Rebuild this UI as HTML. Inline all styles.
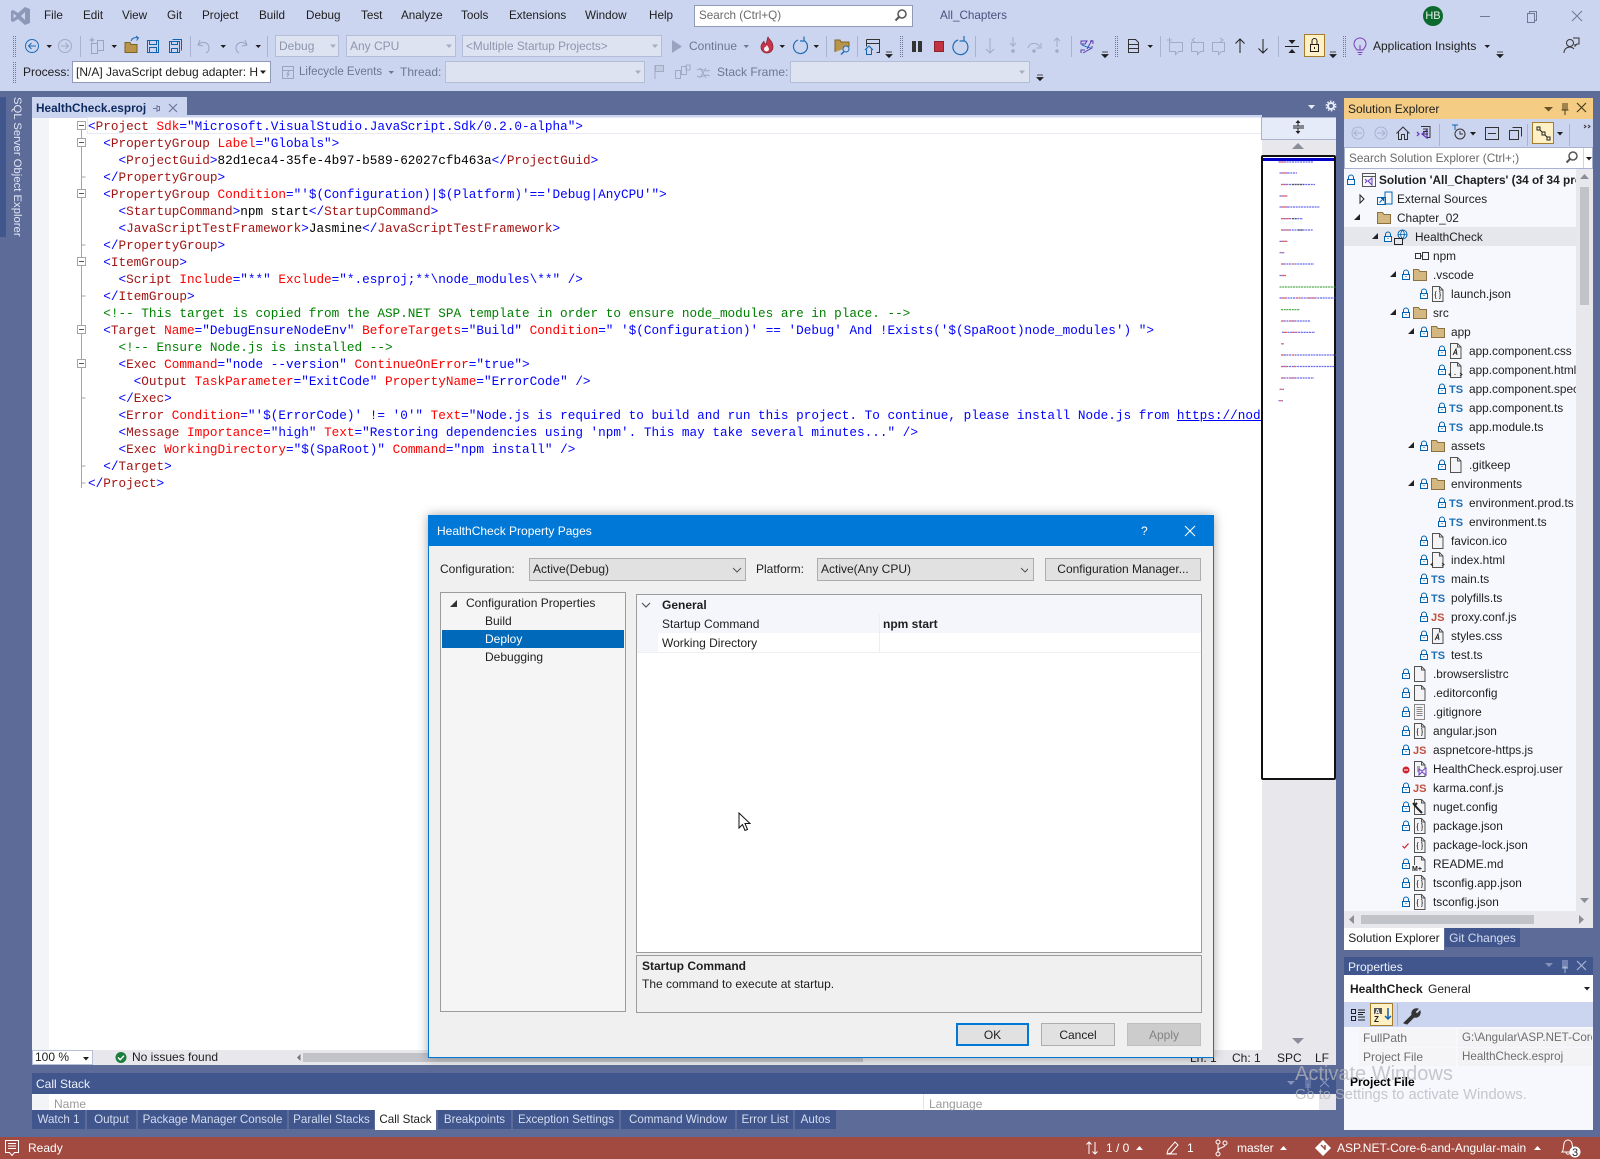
<!DOCTYPE html>
<html lang="en"><head><meta charset="utf-8"><title>HealthCheck Property Pages</title>
<style>
html,body{margin:0;padding:0}
body{position:relative;width:1600px;height:1159px;overflow:hidden;background:#5d6b99;font:12px/16px "Liberation Sans",sans-serif;color:#1e1e1e}
div,span.t,svg.a{position:absolute}
.t{position:absolute;white-space:nowrap;line-height:16px}
.m{font-size:11.7px}
.dim{color:#6d7792}
.cb{background:#dde3f1;border:1px solid #b4bdd8;box-sizing:border-box;color:#8d96ae}
.tab{background:#40568d;color:#d5dcf0;height:19px;top:1110px;line-height:20px;text-align:center;font-size:11.6px}
pre{position:absolute;left:88px;top:118px;margin:0;font:12.7px/17px "Liberation Mono",monospace;color:#00f;width:1173px;overflow:hidden;white-space:pre}
pre i{font-style:normal;color:#a31515}pre em{font-style:normal;color:#f00}pre b{font-weight:normal;color:#000}pre u{color:#00f}pre s{text-decoration:none;color:#008000}
.btn{position:absolute;top:1023px;height:23px;box-sizing:border-box;background:#e1e1e1;border:1px solid #adadad;text-align:center;line-height:23px}
.dc{background:#e1e1e1;border:1px solid #adadad;box-sizing:border-box;top:558px;height:23px;line-height:21px}
svg text{font:11.85px "Liberation Sans",sans-serif;fill:#1e1e1e}
</style></head><body>

<!-- chrome top -->
<div style="left:0;top:0;width:1600px;height:91px;background:#ccd5f0"></div>
<span class="t m" style="left:44px;top:8px">File</span>
<span class="t m" style="left:83px;top:8px">Edit</span>
<span class="t m" style="left:122px;top:8px">View</span>
<span class="t m" style="left:167px;top:8px">Git</span>
<span class="t m" style="left:202px;top:8px">Project</span>
<span class="t m" style="left:259px;top:8px">Build</span>
<span class="t m" style="left:306px;top:8px">Debug</span>
<span class="t m" style="left:361px;top:8px">Test</span>
<span class="t m" style="left:401px;top:8px">Analyze</span>
<span class="t m" style="left:461px;top:8px">Tools</span>
<span class="t m" style="left:509px;top:8px">Extensions</span>
<span class="t m" style="left:585px;top:8px">Window</span>
<span class="t m" style="left:649px;top:8px">Help</span>
<div style="left:694px;top:5px;width:219px;height:22px;background:#fff;border:1px solid #8f99b8;box-sizing:border-box"></div>
<span class="t m" style="left:699px;top:8px;color:#6a6a6a">Search (Ctrl+Q)</span>
<span class="t m" style="left:940px;top:8px;color:#47527d">All_Chapters</span>
<div style="left:1423px;top:6px;width:20px;height:20px;border-radius:50%;background:#0d6a2e;color:#e6f2ea;text-align:center;line-height:20px;font-size:11px">HB</div>

<!-- toolbar row 2 controls -->
<div class="cb" style="left:275px;top:35px;width:64px;height:22px;padding-left:3px;line-height:20px">Debug</div>
<div class="cb" style="left:346px;top:35px;width:110px;height:22px;padding-left:3px;line-height:20px">Any CPU</div>
<div class="cb" style="left:462px;top:35px;width:200px;height:22px;padding-left:3px;line-height:20px;font-size:11.8px">&lt;Multiple Startup Projects&gt;</div>
<span class="t dim" style="left:689px;top:38px">Continue</span>
<span class="t" style="left:1373px;top:38px">Application Insights</span>
<div style="left:1304px;top:34px;width:21px;height:23px;background:#fff1c5;border:1px solid #a67c2b;box-sizing:border-box"></div>

<!-- toolbar row 3 -->
<span class="t" style="left:23px;top:64px">Process:</span>
<div style="left:72px;top:61px;width:199px;height:22px;background:#fff;border:1px solid #8f99b8;box-sizing:border-box;padding-left:3px;line-height:20px;white-space:nowrap;overflow:hidden">[N/A] JavaScript debug adapter: H</div>
<span class="t dim" style="left:299px;top:64px;font-size:11.5px">Lifecycle Events</span>
<span class="t dim" style="left:400px;top:64px">Thread:</span>
<div class="cb" style="left:445px;top:61px;width:200px;height:22px"></div>
<span class="t dim" style="left:717px;top:64px">Stack Frame:</span>
<div class="cb" style="left:790px;top:61px;width:240px;height:22px"></div>

<!-- toolbar icons -->
<svg class="a" style="left:0;top:0" width="1600" height="92" viewBox="0 0 1600 92" fill="none">
<!-- logo -->
<path d="M13 10l5 3 7-6 5 2v14l-5 2-7-6-5 3-2-1V11z" fill="#8d97b8"/><path d="M25 12l-4 4 4 4z" fill="#ccd5f0"/><path d="M13.500 13.500l3 2.500-3 2.500z" fill="#ccd5f0"/>
<!-- menu search -->
<circle cx="902" cy="14" r="4" stroke="#555" stroke-width="1.500"/><path d="M899 17l-3.500 3.500" stroke="#555" stroke-width="2"/>
<!-- window buttons -->
<path d="M1480 16.500h10" stroke="#707a98"/><path d="M1527.500 13.500h7v9h-7zM1529.500 13.500v-2h7v9h-2" stroke="#707a98"/><path d="M1572 11l10 10M1582 11l-10 10" stroke="#707a98"/>
<!-- grippers -->
<path d="M13.500 36v21M15.500 36v21M13.500 62v21M15.500 62v21M900.500 36v21M902.500 36v21M1115.500 36v21M1117.500 36v21M1343.500 36v21M1345.500 36v21" stroke="#6d7899" stroke-dasharray="1 1"/>
<!-- separators -->
<path d="M80.500 36v21M190.500 36v21M267.500 36v21M826.500 36v21M857.500 36v21M975.500 36v21M1071.500 36v21M1160.500 36v21M1278.500 36v21" stroke="#a9b3d0"/>
<!-- back / forward -->
<circle cx="32" cy="46" r="6.500" stroke="#1f6cb5"/><path d="M36 46h-7.500M31.500 43l-3 3 3 3" stroke="#1f6cb5"/>
<circle cx="65" cy="46" r="6.500" stroke="#a2abc4"/><path d="M61 46h7.500M65.500 43l3 3-3 3" stroke="#a2abc4"/>
<!-- carets -->
<path d="M46.500 45h5.500l-2.750 3z M220.500 45h5.500l-2.750 3z M255.500 45h5.500l-2.750 3z M111.500 45h5.500l-2.750 3z" fill="#1e1e1e"/>
<path d="M743.500 45h5.500l-2.750 3z" fill="#6d7792"/>
<path d="M779.500 45h5.500l-2.750 3zM813.500 45h5.500l-2.750 3zM1147.500 45h5.500l-2.750 3zM1484.500 45h5.500l-2.750 3z" fill="#1e1e1e"/>
<path d="M388.500 71h5.500l-2.750 3z" fill="#6d7792"/>
<path d="M886 52h6M886 54.500h6l-3 3zM1102 52h6M1102 54.500h6l-3 3zM1330 52h6M1330 54.500h6l-3 3zM1497 52h6M1497 54.500h6l-3 3zM1037 75h6M1037 77.500h6l-3 3z" stroke="#1e1e1e" fill="#1e1e1e" stroke-width=".8"/>
<!-- new project -->
<path d="M91.500 43.500h6v10h-6zM97.500 40.500h6v10h-6z" stroke="#9aa3bf"/><path d="M92 37l1 2 2 1-2 1-1 2-1-2-2-1 2-1z" fill="#a2abc4"/>
<!-- open -->
<path d="M125 52.500v-10h5l1 2h6v8z" fill="#b8954a" stroke="#7c6328"/><path d="M131 41c1-3 4-4 7-3M136 36l2.500 2-2 2.500" stroke="#1f6cb5"/>
<!-- save -->
<path d="M147.500 40.500h11v12h-11zM149.500 40.500v4h7v-4M149.500 52.500v-5h7v5" stroke="#0f62b0"/>
<path d="M169.500 41.500h10v11h-10zM171.500 41.500v3h6v-3M171.500 52.500v-4h6v4M172.500 39.500h9v11" stroke="#0f62b0"/>
<!-- undo / redo -->
<path d="M200 40l-2 5 5 1M198 45c5-5 11-2 11 3 0 2-1 4-3 5" stroke="#9aa3bf"/>
<path d="M245 40l2 5-5 1M247 45c-5-5-11-2-11 3 0 2 1 4 3 5" stroke="#9aa3bf"/>
<!-- play -->
<path d="M672 40l10 6.500-10 6.500z" fill="#9aa3bf"/>
<!-- fire -->
<g transform="translate(2,0)"><path d="M766 37c1 3 5 4 5 10a6 6 0 0 1-12 0c0-3 2-4 3-6 0 2 1 3 2 3 1-2 1-5 2-7z" fill="#c8344a" stroke="#7a2330" stroke-width=".7"/><path d="M765 45c1 2 2 3 2 4a2.500 2.500 0 0 1-5 0c0-2 2-2 3-4z" fill="#f4f4f4"/></g>
<!-- restart -->
<path d="M798 40a7 7 0 1 0 6 .500M804 36.500v4.500h-4" stroke="#1f6cb5" stroke-width="1.200"/>
<!-- folder search -->
<path d="M835 52v-12h5l1 2h8v5" fill="#b8954a" stroke="#7c6328"/><circle cx="846" cy="49" r="3" fill="#ccd5f0" stroke="#1f6cb5"/><path d="M844 51.500l-3 3" stroke="#1f6cb5" stroke-width="1.500"/>
<!-- window home -->
<path d="M866.500 39.500h13v13h-3M866.500 39.500v7M866.500 43.500h13" stroke="#333"/><path d="M865 50l4-4 4 4M866.500 49.500v5h5v-5" stroke="#0f62b0"/>
<!-- pause stop restart -->
<path d="M912 41h4v11h-4zM918 41h4v11h-4z" fill="#333"/>
<rect x="934.500" y="41.500" width="9" height="10" fill="#c4323f" stroke="#8a2530"/>
<path d="M958 40a7.500 7.500 0 1 0 6 .500M964 36v5h-4.500" stroke="#1f6cb5" stroke-width="1.200"/>
<!-- steps -->
<path d="M990 38v15M986 49l4 4 4-4" stroke="#a2abc4"/>
<path d="M1013 37v9M1010 43l3 3 3-3" stroke="#a2abc4"/><circle cx="1013" cy="51" r="1.800" fill="#a2abc4"/>
<path d="M1028 48c2-6 9-6 12-1M1041 43v5h-5" stroke="#a2abc4"/><circle cx="1034" cy="51" r="1.800" fill="#a2abc4"/>
<path d="M1057 47v-9M1054 41l3-3 3 3" stroke="#a2abc4"/><circle cx="1057" cy="51" r="1.800" fill="#a2abc4"/>
<!-- hex -->
<path d="M1081 41h6l-2 3h-4zM1087 49l5-9M1083 53l9-5v-2M1081 53v-3h4M1090 41h3v3" stroke="#5a3cae"/><path d="M1082 45c3 1 6 3 9 3" stroke="#1f6cb5"/>
<!-- doc -->
<path d="M1128.500 39.500h7l3 3v10h-10zM1128.500 44.500h10M1128.500 48.500h10" stroke="#333"/>
<!-- comments -->
<g stroke="#a2abc4"><path d="M1169.500 42.500h13v9h-4l-3 3v-3h-6zM1167 40h5M1169.500 37.500v5"/>
<path d="M1191.500 42.500h12v9h-3l-3 3v-3h-6zM1195 38l-3 2 3 2"/>
<path d="M1212.500 42.500h12v9h-3l-3 3v-3h-6zM1220 38l3 2-3 2"/></g>
<!-- up/down -->
<path d="M1240 39v14M1235.500 43.500l4.500-4.500 4.500 4.500M1263 39v14M1258.500 48.500l4.500 4.500 4.500-4.500" stroke="#1e1e1e"/>
<!-- fit -->
<path d="M1285 46.500h14" stroke="#1e1e1e"/><path d="M1292 44l-3.500-4h7zM1292 49l-3.500 4h7z" fill="#1e1e1e"/>
<!-- lock highlighted -->
<path d="M1312 44v-3a2.500 2.500 0 0 1 5 0v3" stroke="#1e1e1e"/><rect x="1310.500" y="44.500" width="8" height="7" stroke="#1e1e1e"/><path d="M1314.500 47v2" stroke="#1e1e1e"/>
<!-- bulb -->
<path d="M1357 50c-1-2-3-3-3-6a6 6 0 0 1 12 0c0 3-2 4-3 6zM1357.500 52.500h5M1358.500 54.500h3M1360 50v-5" stroke="#7a3fb5"/>
<!-- feedback person -->
<circle cx="1570" cy="43" r="3.500" stroke="#333"/><path d="M1564 53c0-4 3-6 6-6 2 0 3 1 4 2M1573 38h6v6h-2l-2 2v-2" stroke="#333"/>
<!-- combo carets -->
<path d="M330 44.500h6l-3 3.500zM446 44.500h6l-3 3.500zM652 44.500h6l-3 3.500zM635 70.500h6l-3 3.500zM1019 70.500h6l-3 3.500z" fill="#a6aec4"/>
<path d="M260 70.500h6l-3 3.500z" fill="#1e1e1e"/>
<!-- row 3 icons -->
<path d="M282.500 66.500h11v12h-11zM282.500 70.500h11M289 71l-2 3h2l-2 3" stroke="#9aa3bf"/>
<path d="M655 65v14M655.500 65.500h8v6h-8z" stroke="#a2abc4" fill="#c2cae0"/>
<path d="M675.500 70.500h5v8h-5zM681.500 66.500h5v8h-5zM686 65h4v5h-4z" stroke="#a2abc4"/>
<path d="M697 70c3-3 9 3 13 0M697 76c3 3 9-3 13 0M700 68l6 10M706 68l-6 10" stroke="#a2abc4"/>
</svg>

<!-- left vertical tab -->
<div style="left:0;top:97px;width:6px;height:140px;background:#40568d"></div>
<div style="left:8px;top:97px;width:18px;height:140px;writing-mode:vertical-rl;line-height:18px;color:#e3e7f3;white-space:nowrap;font-size:11.3px">SQL Server Object Explorer</div>

<!-- doc tab -->
<div style="left:32px;top:97px;width:155px;height:21px;background:#ccd5f0"></div>
<span class="t" style="left:36px;top:100px;color:#0e2a5e;font-weight:bold;font-size:11.800px">HealthCheck.esproj</span>
<div style="left:32px;top:115px;width:1230px;height:3px;background:#ccd5f0"></div>
<svg class="a" style="left:150px;top:100px" width="40" height="18" fill="none"><path d="M7 5v7M7 8.500h-4M7 6.500h2.500v4H7" stroke="#6d7899"/><path d="M19 4l8 8M27 4l-8 8" stroke="#6d7899" stroke-width="1.200"/></svg>
<svg class="a" style="left:1300px;top:98px" width="40" height="18"><path d="M8 7h7l-3.500 4z" fill="#e8ecf7"/><circle cx="31" cy="8" r="3" fill="none" stroke="#e8ecf7" stroke-width="2"/><circle cx="31" cy="8" r="4.700" fill="none" stroke="#e8ecf7" stroke-dasharray="1.500 1.500" stroke-width="1.500"/></svg>

<!-- editor -->
<div style="left:32px;top:118px;width:1230px;height:932px;background:#fff"></div>
<div style="left:32px;top:118px;width:17px;height:932px;background:#f3f4f8"></div>
<div style="left:87px;top:117px;width:1174px;height:17px;box-sizing:border-box;border:1px solid #e8e9f2;border-right:0"></div>
<svg class="a" style="left:70px;top:118px" width="20" height="380" fill="none">
<path d="M11.500 12V370M11.500 59h4M11.500 127h4M11.500 178h4M11.500 280h4M11.500 348h4M11.500 365h4" stroke="#a5a5a5"/>
<g stroke="#a5a5a5" fill="#fff"><path d="M7.500 3.500h8v8h-8zM7.500 20.500h8v8h-8zM7.500 71.500h8v8h-8zM7.500 139.500h8v8h-8zM7.500 207.500h8v8h-8zM7.500 241.500h8v8h-8z"/></g>
<path d="M9 7.500h5M9 24.500h5M9 75.500h5M9 143.500h5M9 211.500h5M9 245.500h5" stroke="#555"/>
</svg>
<pre>&lt;<i>Project</i> <em>Sdk</em>="Microsoft.VisualStudio.JavaScript.Sdk/0.2.0-alpha"&gt;
  &lt;<i>PropertyGroup</i> <em>Label</em>="Globals"&gt;
    &lt;<i>ProjectGuid</i>&gt;<b>82d1eca4-35fe-4b97-b589-62027cfb463a</b>&lt;/<i>ProjectGuid</i>&gt;
  &lt;/<i>PropertyGroup</i>&gt;
  &lt;<i>PropertyGroup</i> <em>Condition</em>="'$(Configuration)|$(Platform)'=='Debug|AnyCPU'"&gt;
    &lt;<i>StartupCommand</i>&gt;<b>npm start</b>&lt;/<i>StartupCommand</i>&gt;
    &lt;<i>JavaScriptTestFramework</i>&gt;<b>Jasmine</b>&lt;/<i>JavaScriptTestFramework</i>&gt;
  &lt;/<i>PropertyGroup</i>&gt;
  &lt;<i>ItemGroup</i>&gt;
    &lt;<i>Script</i> <em>Include</em>="**" <em>Exclude</em>="*.esproj;**\node_modules\**" /&gt;
  &lt;/<i>ItemGroup</i>&gt;
  <s>&lt;!-- This target is copied from the ASP.NET SPA template in order to ensure node_modules are in place. --&gt;</s>
  &lt;<i>Target</i> <em>Name</em>="DebugEnsureNodeEnv" <em>BeforeTargets</em>="Build" <em>Condition</em>=" '$(Configuration)' == 'Debug' And !Exists('$(SpaRoot)node_modules') "&gt;
    <s>&lt;!-- Ensure Node.js is installed --&gt;</s>
    &lt;<i>Exec</i> <em>Command</em>="node --version" <em>ContinueOnError</em>="true"&gt;
      &lt;<i>Output</i> <em>TaskParameter</em>="ExitCode" <em>PropertyName</em>="ErrorCode" /&gt;
    &lt;/<i>Exec</i>&gt;
    &lt;<i>Error</i> <em>Condition</em>="'$(ErrorCode)' != '0'" <em>Text</em>="Node.js is required to build and run this project. To continue, please install Node.js from <u>https://nodejs.org/</u>, and then restart" /&gt;
    &lt;<i>Message</i> <em>Importance</em>="high" <em>Text</em>="Restoring dependencies using 'npm'. This may take several minutes..." /&gt;
    &lt;<i>Exec</i> <em>WorkingDirectory</em>="$(SpaRoot)" <em>Command</em>="npm install" /&gt;
  &lt;/<i>Target</i>&gt;
&lt;/<i>Project</i>&gt;</pre>

<!-- editor scrollbar / map -->
<div style="left:1262px;top:117px;width:74px;height:948px;background:#e8e8ec"></div>
<div style="left:1261px;top:117px;width:75px;height:23px;background:#e6ebf9;border:1px solid #a9b3cf;border-right:0;box-sizing:border-box"></div>
<div style="left:1261px;top:155px;width:75px;height:625px;background:#fff;border:2px solid #111;box-sizing:border-box;border-radius:2px"></div>
<div style="left:1263px;top:158px;width:71px;height:3px;background:#0000c8"></div>
<svg class="a" style="left:1240px;top:110px" width="100" height="950" fill="none">
<path d="M58 11v5M58 18v5M53 16h11M53 18h11" stroke="#222"/><path d="M55.500 13l2.500-3 2.500 3zM55.500 21l2.500 3 2.500-3z" fill="#222"/>
<path d="M58 33l-6 6h12z" fill="#8b8d99"/><path d="M52 928h12l-6 6z" fill="#8b8d99"/>
</svg>
<svg class="a" style="left:1240px;top:0" width="96" height="420" fill="none" stroke-width="1.200" stroke-dasharray="2 .7" opacity=".75">
<path stroke="#3a3ae8" d="M38.500 162h35M39.500 173H57M41 184.500h34M39.500 196H48M39.500 207H80M41 218.600H63M41 230H73M39.500 241.400H48M39.500 252.700H45M41 264H74M39.500 275.500H46M39.500 298H96M41 321H70M42 332.400H75M41 343.800H44M41 355H96M41 366.500H95M41 378H74M39.500 389.300H44M38.500 400.700H43"/>
<path stroke="#e23a3a" d="M40 162h6M41 173h7M42 184.500h6M42 218.600h7M42 230h8M41 207h7M47 219h0M41 196h6M41 241.400h6M41 252.700h3M42 264h3M52 264h4M41 275.500h4M41 298h6M56 298h6M68 298h8M42 321h3M50 321h5M43 332.400h4M52 332.400h5M42 343.800h2M42 355h4M52 355h3M42 366.500h5M53 366.500h3M42 378h3M50 378h5M40 389.300h3M40 400.700h3"/>
<path stroke="#222" d="M52 184.500h12M52 218.600h5M58 230h5"/>
<path stroke="#1a8f1a" d="M39.500 287H96M41 309.600H60"/>
</svg>

<!-- editor bottom bar -->
<div style="left:32px;top:1050px;width:1230px;height:15px;background:#e8e8ec"></div>
<div style="left:32px;top:1050px;width:61px;height:15px;background:#fff;border:1px solid #b8c0d8;box-sizing:border-box;line-height:13px;padding-left:2px">100 %</div>
<svg class="a" style="left:80px;top:1050px" width="240" height="15"><path d="M3 7h6l-3 3.500z" fill="#1e1e1e"/><circle cx="41" cy="7.500" r="5.500" fill="#1b7e3c"/><path d="M38 7.500l2.200 2.200 3.800-4" stroke="#fff" stroke-width="1.400" fill="none"/><path d="M217 7.500l3.500-3.500v7z" fill="#777"/><rect x="223" y="3" width="17" height="9" fill="#c2c3c9"/></svg>
<span class="t" style="left:132px;top:1050px;line-height:15px">No issues found</span>
<div style="left:303px;top:1053px;width:560px;height:9px;background:#c2c3c9"></div>
<span class="t" style="left:1190px;top:1050px;line-height:16px">Ln: 1</span>
<span class="t" style="left:1232px;top:1050px;line-height:16px">Ch: 1</span>
<span class="t" style="left:1277px;top:1050px;line-height:16px">SPC</span>
<span class="t" style="left:1315px;top:1050px;line-height:16px">LF</span>

<!-- call stack -->
<div style="left:32px;top:1073px;width:1304px;height:21px;background:#40568d"></div>
<span class="t" style="left:36px;top:1076px;color:#eef1fa">Call Stack</span>
<div style="left:32px;top:1094px;width:1304px;height:16px;background:#fff"></div>
<div style="left:32px;top:1094px;width:17px;height:16px;background:#f3f4f8"></div>
<div style="left:923px;top:1094px;width:1px;height:16px;background:#e4e4ea"></div>
<div style="left:1319px;top:1094px;width:17px;height:16px;background:#e8e8ec"></div>
<span class="t" style="left:54px;top:1096px;color:#9a9a9a">Name</span>
<span class="t" style="left:929px;top:1096px;color:#9a9a9a">Language</span>
<svg class="a" style="left:1284px;top:1075px" width="52" height="17" fill="none"><path d="M3 6h8l-4 4z" fill="#8592bb"/><path d="M24 2v10M21 12h6M24 12v4M22 3v7h4V3" stroke="#8592bb"/><path d="M36 3l9 9M45 3l-9 9" stroke="#8592bb" stroke-width="1.200"/></svg>
<div class="tab" style="left:32px;width:53px">Watch 1</div>
<div class="tab" style="left:87px;width:49px">Output</div>
<div class="tab" style="left:138px;width:149px">Package Manager Console</div>
<div class="tab" style="left:289px;width:85px">Parallel Stacks</div>
<div class="tab" style="left:375px;width:61px;background:#fff;color:#1e1e1e;height:20px">Call Stack</div>
<div class="tab" style="left:438px;width:73px">Breakpoints</div>
<div class="tab" style="left:513px;width:106px">Exception Settings</div>
<div class="tab" style="left:621px;width:114px">Command Window</div>
<div class="tab" style="left:737px;width:56px">Error List</div>
<div class="tab" style="left:795px;width:41px">Autos</div>

<!-- solution explorer -->
<div style="left:1344px;top:98px;width:249px;height:21px;background:#f5cc84"></div>
<span class="t" style="left:1348px;top:101px">Solution Explorer</span>
<svg class="a" style="left:1540px;top:98px" width="53" height="21" fill="none"><path d="M4 9h9l-4.500 4.500z" fill="#6a5320"/><path d="M25 5v10M21.500 12h7M25 12v5M23 5v7h4V5" stroke="#4b3c18"/><path d="M37 5l9 9M46 5l-9 9" stroke="#4b3c18" stroke-width="1.200"/></svg>
<div style="left:1344px;top:119px;width:249px;height:28px;background:#ccd5f0"></div>
<div style="left:1532px;top:122px;width:22px;height:22px;background:#fff1c5;border:1px solid #a67c2b;box-sizing:border-box"></div>
<svg class="a" style="left:1344px;top:119px" width="249" height="28" fill="none">
<circle cx="14" cy="14" r="6" stroke="#a9b3cf"/><path d="M18 14h-7.500M13 11l-3 3 3 3" stroke="#a9b3cf"/>
<circle cx="37" cy="14" r="6" stroke="#a9b3cf"/><path d="M33 14h7.500M38 11l3 3-3 3" stroke="#a9b3cf"/>
<path d="M52.500 14.500l6.500-6.500 6.500 6.500M54.500 13v7.500h3v-5h3v5h3V13" stroke="#333"/>
<path d="M78 15l5 4v-8zM73 13l2 2-2 2" stroke="#6a3fc0" fill="none" stroke-width="1.300"/><path d="M77 7.500h9v11h-3M79 10h5M79 12.500h5M79 15h5" stroke="#333"/>
<path d="M95.500 5v22" stroke="#a9b3cf"/>
<path d="M108 6h6M111 6v5" stroke="#0f62b0"/><circle cx="116" cy="15" r="5" stroke="#333"/><path d="M116 12v3h3" stroke="#333"/>
<path d="M126 13h6l-3 3.500z" fill="#1e1e1e"/>
<path d="M141.500 8.500h13v12h-13zM144 14.500h8" stroke="#333"/>
<path d="M165.500 11.500h9v9h-9zM168.500 8.500h9v9" stroke="#333"/>
<path d="M183.500 5v22" stroke="#a9b3cf"/>
<path d="M193 8h3v3h-3zM198 13h3v3h-3zM203 18h3v3h-3zM196 11l2 2M201 16l2 2" stroke="#222"/>
<path d="M213 13h6l-3 3.500z" fill="#1e1e1e"/>
<path d="M225.500 5v22" stroke="#a9b3cf"/>
<path d="M240 6l2 1.500-2 1.500M244 6l2 1.500-2 1.500" stroke="#333"/>
</svg>
<div style="left:1344px;top:147px;width:249px;height:22px;background:#fff;border:1px solid #a9b3cf;box-sizing:border-box"></div>
<span class="t" style="left:1349px;top:150px;color:#6a6a6a;font-size:11.8px">Search Solution Explorer (Ctrl+;)</span>
<svg class="a" style="left:1560px;top:147px" width="33" height="22" fill="none"><circle cx="13" cy="9" r="4" stroke="#555" stroke-width="1.500"/><path d="M10 12l-3.500 3.500" stroke="#555" stroke-width="2"/><path d="M23.500 1v20" stroke="#cfd5e6"/><path d="M26 10h6l-3 3.500z" fill="#1e1e1e"/></svg>

<!-- tree -->
<div style="left:1344px;top:169px;width:232px;height:742px;background:#f7f8fd"></div>
<div style="left:1344px;top:227px;width:232px;height:19px;background:#e6e7ed"></div>
<div style="left:1576px;top:169px;width:17px;height:742px;background:#e8e8ec"></div>
<div style="left:1580px;top:187px;width:9px;height:118px;background:#c2c3c9"></div>
<svg class="a" style="left:1576px;top:169px" width="17" height="742"><path d="M8.500 5l-4.500 5h9z" fill="#8b8d99"/><path d="M4 729h9l-4.500 5z" fill="#8b8d99"/></svg>
<div style="left:1344px;top:911px;width:249px;height:17px;background:#e8e8ec"></div>
<div style="left:1361px;top:915px;width:173px;height:9px;background:#c2c3c9"></div>
<svg class="a" style="left:1344px;top:911px" width="249" height="17"><path d="M5 8.500l5-4.500v9z" fill="#8b8d99"/><path d="M235 4v9l5-4.500z" fill="#8b8d99"/></svg>

<svg class="a" id="tree" style="left:1344px;top:170px" width="232" height="741" viewBox="0 0 232 741" fill="none">
<defs>
<g id="l"><path d="M-29.500-.5v-2a2.500 2.500 0 0 1 5 0v2" stroke="#0063b1"/><rect x="-30.500" y="-.5" width="7" height="5" stroke="#0063b1" fill="#f7f8fd"/><path d="M-27.500 1.500h1" stroke="#0063b1"/></g>
<path id="a" d="M-37-4v6h-6z" fill="#222"/>
<path id="f" d="M-19.500-5.500h5l1.500 2h6.500v9h-13z" fill="#d3b981" stroke="#8a713f"/>
<path id="d" d="M-18.500-7.500h7l3.500 3.500v11.500h-10.500zM-11.500-7.500v3.500h3.500" fill="#f4f4f6" stroke="#525252"/>
<g id="j"><use href="#d"/><path d="M-14.500-2.500c-1.500 0-1 1-1 2.500 0 1-.5 1-1 1 .5 0 1 0 1 1 0 1.500-.5 2.500 1 2.500M-12-2.500c1.500 0 1 1 1 2.500 0 1 .5 1 1 1-.5 0-1 0-1 1 0 1.500.5 2.500-1 2.500" stroke="#333" stroke-width=".8"/></g>
</defs>
<style>#tree .ts{font:bold 11px "Liberation Sans",sans-serif;fill:#1f6fb5}#tree .js{font:bold 11px "Liberation Sans",sans-serif;fill:#c0513e}</style>

<g transform="translate(35,10)"><path d="M-30.500-.5v-2a2.500 2.500 0 0 1 5 0v2M-31.500-.5h7v5h-7z" stroke="#0063b1"/><path d="M-16.500-6.500h13v13h-13zM-16.500-3.500h13" stroke="#555"/><path d="M-11 1l4-3v7zM-14-1l2 2-2 2" stroke="#6a3fc0" fill="#e8e4f7"/><text y="4" style="font-weight:bold">Solution 'All_Chapters' (34 of 34 projects)</text></g>
<g transform="translate(53,29)"><path d="M-37-4l4 4-4 4z" stroke="#222"/><path d="M-12-7h7v12h-7z" stroke="#0063b1"/><path d="M-19.500-1.500h8v7h-8zM-17.500 3.500l4-4M-16-.5h2.500V2" stroke="#0063b1"/><text y="4">External Sources</text></g>
<g transform="translate(53,48)"><use href="#a"/><use href="#f"/><text y="4">Chapter_02</text></g>
<g transform="translate(71,67)"><use href="#a"/><use href="#l"/><circle cx="-12.500" cy="-2.500" r="4.500" stroke="#0063b1" fill="#f0f3fb"/><path d="M-17-2.500h9M-12.500-7c-2.500 3-2.500 6 0 9M-12.500-7c2.500 3 2.500 6 0 9" stroke="#0063b1" stroke-width=".8"/><rect x="-20.500" y="1.500" width="8" height="6" fill="#e6e7ed" stroke="#222"/><text y="4">HealthCheck</text></g>
<g transform="translate(89,86)"><path d="M-17.500-2.500h5v5h-5zM-12.500 0h2M-10.500-3.500h6v7h-6z" stroke="#333"/><text y="4">npm</text></g>
<g transform="translate(89,105)"><use href="#a"/><use href="#l"/><use href="#f"/><text y="4">.vscode</text></g>
<g transform="translate(107,124)"><use href="#l"/><use href="#j"/><text y="4">launch.json</text></g>
<g transform="translate(89,143)"><use href="#a"/><use href="#l"/><use href="#f"/><text y="4">src</text></g>
<g transform="translate(107,162)"><use href="#a"/><use href="#l"/><use href="#f"/><text y="4">app</text></g>
<g transform="translate(125,181)"><use href="#l"/><use href="#d"/><path d="M-16 4l3-6 1 6M-15 2h3" stroke="#222" stroke-width=".9"/><text y="4">app.component.css</text></g>
<g transform="translate(125,200)"><use href="#l"/><use href="#d"/><path d="M-18 3l-2 1.500 2 1.500M-9 3l2 1.500-2 1.500M-14.500 4.500h1" stroke="#222"/><text y="4">app.component.html</text></g>
<g transform="translate(125,219)"><use href="#l"/><text x="-20" y="4" class="ts">TS</text><text y="4">app.component.spec.ts</text></g>
<g transform="translate(125,238)"><use href="#l"/><text x="-20" y="4" class="ts">TS</text><text y="4">app.component.ts</text></g>
<g transform="translate(125,257)"><use href="#l"/><text x="-20" y="4" class="ts">TS</text><text y="4">app.module.ts</text></g>
<g transform="translate(107,276)"><use href="#a"/><use href="#l"/><use href="#f"/><text y="4">assets</text></g>
<g transform="translate(125,295)"><use href="#l"/><use href="#d"/><text y="4">.gitkeep</text></g>
<g transform="translate(107,314)"><use href="#a"/><use href="#l"/><use href="#f"/><text y="4">environments</text></g>
<g transform="translate(125,333)"><use href="#l"/><text x="-20" y="4" class="ts">TS</text><text y="4">environment.prod.ts</text></g>
<g transform="translate(125,352)"><use href="#l"/><text x="-20" y="4" class="ts">TS</text><text y="4">environment.ts</text></g>
<g transform="translate(107,371)"><use href="#l"/><use href="#d"/><text y="4">favicon.ico</text></g>
<g transform="translate(107,390)"><use href="#l"/><use href="#d"/><path d="M-18 3l-2 1.500 2 1.500M-9 3l2 1.500-2 1.500" stroke="#222"/><text y="4">index.html</text></g>
<g transform="translate(107,409)"><use href="#l"/><text x="-20" y="4" class="ts">TS</text><text y="4">main.ts</text></g>
<g transform="translate(107,428)"><use href="#l"/><text x="-20" y="4" class="ts">TS</text><text y="4">polyfills.ts</text></g>
<g transform="translate(107,447)"><use href="#l"/><text x="-20" y="4" class="js">JS</text><text y="4">proxy.conf.js</text></g>
<g transform="translate(107,466)"><use href="#l"/><use href="#d"/><path d="M-16 4l3-6 1 6M-15 2h3" stroke="#222" stroke-width=".9"/><text y="4">styles.css</text></g>
<g transform="translate(107,485)"><use href="#l"/><text x="-20" y="4" class="ts">TS</text><text y="4">test.ts</text></g>
<g transform="translate(89,504)"><use href="#l"/><use href="#d"/><text y="4">.browserslistrc</text></g>
<g transform="translate(89,523)"><use href="#l"/><use href="#d"/><text y="4">.editorconfig</text></g>
<g transform="translate(89,542)"><use href="#l"/><path d="M-18.500-7.500h10v15h-10z" fill="#f4f4f6" stroke="#888"/><path d="M-16.500-4.500h6M-16.500-2.500h6M-16.500-.5h6M-16.500 1.500h6M-16.500 3.500h6" stroke="#888"/><text y="4">.gitignore</text></g>
<g transform="translate(89,561)"><use href="#l"/><use href="#j"/><text y="4">angular.json</text></g>
<g transform="translate(89,580)"><use href="#l"/><text x="-20" y="4" class="js">JS</text><text y="4">aspnetcore-https.js</text></g>
<g transform="translate(89,599)"><circle cx="-27" cy="1" r="3.500" fill="#d0212f"/><path d="M-29 1h4" stroke="#fff"/><use href="#d"/><path d="M-16-2h3M-16 0h3M-16 2h3" stroke="#333" stroke-width=".8"/><path d="M-11 2l4-3v7l-4-3-3 3v-6z" stroke="#6a3fc0" fill="#e8e4f7"/><text y="4">HealthCheck.esproj.user</text></g>
<g transform="translate(89,618)"><use href="#l"/><text x="-20" y="4" class="js">JS</text><text y="4">karma.conf.js</text></g>
<g transform="translate(89,637)"><use href="#l"/><use href="#d"/><path d="M-20-4l5 6 4 4M-19-1l3-3" stroke="#222" stroke-width="2"/><text y="4">nuget.config</text></g>
<g transform="translate(89,656)"><use href="#l"/><use href="#j"/><text y="4">package.json</text></g>
<g transform="translate(89,675)"><path d="M-30.500 1l2 2 4-4.500" stroke="#d0212f" stroke-width="1.200"/><use href="#j"/><text y="4">package-lock.json</text></g>
<g transform="translate(89,694)"><use href="#l"/><use href="#d"/><rect x="-21" y="1" width="10" height="7" fill="#f7f8fd"/><text x="-21" y="7" style="font:bold 7px 'Liberation Sans',sans-serif">M+</text><text y="4">README.md</text></g>
<g transform="translate(89,713)"><use href="#l"/><use href="#j"/><text y="4">tsconfig.app.json</text></g>
<g transform="translate(89,732)"><use href="#l"/><use href="#j"/><text y="4">tsconfig.json</text></g>
</svg>

<div style="left:1344px;top:928px;width:100px;height:22px;background:#fff;line-height:21px;text-align:center">Solution Explorer</div>
<div style="left:1445px;top:928px;width:75px;height:19px;background:#40568d;color:#d5dcf0;line-height:21px;text-align:center">Git Changes</div>

<!-- properties -->
<div style="left:1344px;top:957px;width:249px;height:18px;background:#40568d"></div>
<span class="t" style="left:1348px;top:959px;color:#eef1fa">Properties</span>
<svg class="a" style="left:1540px;top:957px" width="53" height="18" fill="none"><path d="M5 6h8l-4 4z" fill="#8592bb"/><path d="M25 3v9M22 11h6M25 11v5M23 3v7h4V3" stroke="#a9b3d6"/><path d="M37 4l9 9M46 4l-9 9" stroke="#a9b3d6" stroke-width="1.200"/></svg>
<div style="left:1344px;top:975px;width:249px;height:27px;background:#fff"></div>
<span class="t" style="left:1350px;top:981px;font-weight:bold">HealthCheck</span>
<span class="t" style="left:1428px;top:981px">General</span>
<svg class="a" style="left:1582px;top:984px" width="10" height="10"><path d="M2 3h6l-3 3.500z" fill="#1e1e1e"/></svg>
<div style="left:1344px;top:1002px;width:249px;height:25px;background:#ccd5f0"></div>
<div style="left:1370px;top:1003px;width:23px;height:23px;background:#fff1c5;border:1px solid #a67c2b;box-sizing:border-box"></div>
<svg class="a" style="left:1344px;top:1002px" width="249" height="25" fill="none">
<path d="M7.500 7.500h4v4h-4zM7.500 14.500h4v4h-4zM14 8h7M14 10.500h7M14 15h7M14 18h7M14 12.500h5" stroke="#222"/>
<rect x="30" y="6" width="8" height="6" fill="#555"/><text x="31" y="12" style="font:bold 7px 'Liberation Sans',sans-serif;fill:#fff">A</text><text x="30" y="20" style="font:bold 8px 'Liberation Sans',sans-serif;fill:#222">Z</text><path d="M44 6v11M41 14l3 3 3-3" stroke="#0f62b0" stroke-width="1.500"/>
<path d="M53.500 1v23" stroke="#a9b3cf"/>
<path d="M60 21l8-8c-1-4 2-7 6-6l-3 3 2 2 3-3c1 4-2 7-6 6l-7 7z" fill="#333" stroke="#333"/>
</svg>
<div style="left:1344px;top:1027px;width:249px;height:103px;background:#f7f8fe"></div>
<div style="left:1359px;top:1029px;width:97px;height:18px;background:#f5f5f8"></div>
<div style="left:1458px;top:1029px;width:134px;height:18px;background:#f3f3f6;overflow:hidden"></div>
<div style="left:1359px;top:1048px;width:97px;height:18px;background:#f5f5f8"></div>
<div style="left:1458px;top:1048px;width:134px;height:18px;background:#f3f3f6"></div>
<span class="t" style="left:1363px;top:1030px;color:#6d6d6d">FullPath</span>
<span class="t" style="left:1363px;top:1049px;color:#6d6d6d">Project File</span>
<div style="left:1462px;top:1030px;width:130px;overflow:hidden;white-space:nowrap;color:#6d6d6d;font-size:11.6px">G:\Angular\ASP.NET-Core-6-and-Angular</div>
<span class="t" style="left:1462px;top:1049px;color:#6d6d6d;font-size:11.6px">HealthCheck.esproj</span>
<span class="t" style="left:1350px;top:1074px;font-weight:bold;color:#000">Project File</span>

<!-- status bar -->
<div style="left:0;top:1137px;width:1600px;height:22px;background:#a24a40"></div>
<svg class="a" style="left:0;top:1137px" width="1600" height="22" fill="none">
<path d="M5.500 3.500h13v12h-4l-2.500 3-2.500-3h-4zM8 6.500h8M8 9h8M8 11.500h8" stroke="#fff"/>
<path d="M1089 5v12M1086.500 7.500l2.500-2.500 2.500 2.500M1095 5v12M1092.500 14.500l2.500 2.500 2.500-2.500" stroke="#fff"/>
<path d="M1136 13h7l-3.500-4zM1280 13h7l-3.500-4zM1534 13h7l-3.500-4z" fill="#fff"/>
<path d="M1167 17l1-4 7-8 3 3-7 8zM1167 17h10" stroke="#fff"/>
<circle cx="1218" cy="5" r="2" stroke="#fff"/><circle cx="1218" cy="17" r="2" stroke="#fff"/><circle cx="1225" cy="6" r="2" stroke="#fff"/><path d="M1218 7v8M1225 8c0 3-7 2-7 6" stroke="#fff"/>
<path d="M1323 3l8 8-8 8-8-8z" fill="#fff"/><path d="M1321 8l4 4M1325 8v5" stroke="#a24a40" stroke-width="1.500"/>
<path d="M1562 15c2-2 1-5 2-8a4 4 0 0 1 8 0c1 3 0 6 2 8zM1566 15c0 3 4 3 4 0" stroke="#fff"/>
<circle cx="1575" cy="15" r="5.500" fill="#fff"/>
<text x="1572" y="19" style="font:11px 'Liberation Sans',sans-serif;fill:#222">3</text>
</svg>
<span class="t" style="left:28px;top:1140px;color:#fff">Ready</span>
<span class="t" style="left:1106px;top:1140px;color:#fff">1 / 0</span>
<span class="t" style="left:1187px;top:1140px;color:#fff">1</span>
<span class="t" style="left:1237px;top:1140px;color:#fff">master</span>
<span class="t" style="left:1337px;top:1140px;color:#fff">ASP.NET-Core-6-and-Angular-main</span>

<!-- dialog -->
<div style="left:428px;top:515px;width:786px;height:543px;background:#f0f0f0;border:1px solid #0078d7;box-sizing:border-box;box-shadow:0 0 10px rgba(0,0,0,.35)"></div>
<div style="left:428px;top:515px;width:786px;height:31px;background:#0078d7"></div>
<span class="t" style="left:437px;top:523px;color:#fff">HealthCheck Property Pages</span>
<span class="t" style="left:1141px;top:523px;color:#fff">?</span>
<svg class="a" style="left:1183px;top:524px" width="14" height="14"><path d="M2 2l10 10M12 2L2 12" stroke="#fff" fill="none" stroke-width="1.100"/></svg>
<span class="t" style="left:440px;top:561px">Configuration:</span>
<div class="dc" style="position:absolute;left:529px;width:217px;padding-left:3px">Active(Debug)</div>
<span class="t" style="left:756px;top:561px">Platform:</span>
<div class="dc" style="position:absolute;left:817px;width:217px;padding-left:3px">Active(Any CPU)</div>
<div class="dc" style="position:absolute;left:1045px;width:156px;text-align:center">Configuration Manager...</div>
<svg class="a" style="left:728px;top:564px" width="300" height="12" fill="none"><path d="M5 4l4 4 4-4M293 4l4 4 4-4" stroke="#555"/></svg>

<div style="left:440px;top:592px;width:186px;height:420px;background:#f5f5f5;border:1px solid #9c9c9c;box-sizing:border-box"></div>
<svg class="a" style="left:448px;top:598px" width="12" height="12"><path d="M9 2v7H2z" fill="#333"/></svg>
<span class="t" style="left:466px;top:595px">Configuration Properties</span>
<span class="t" style="left:485px;top:613px">Build</span>
<div style="left:442px;top:630px;width:182px;height:18px;background:#0069b9"></div>
<span class="t" style="left:485px;top:631px;color:#fff">Deploy</span>
<span class="t" style="left:485px;top:649px">Debugging</span>

<div style="left:636px;top:594px;width:566px;height:359px;background:#fff;border:1px solid #9c9c9c;box-sizing:border-box"></div>
<div style="left:637px;top:595px;width:564px;height:38px;background:#f4f6fb"></div>
<div style="left:637px;top:633px;width:21px;height:19px;background:#f4f6fb"></div>
<div style="left:879px;top:614px;width:1px;height:38px;background:#eceef4"></div>
<div style="left:637px;top:652px;width:564px;height:1px;background:#eeeff4"></div>
<svg class="a" style="left:640px;top:600px" width="14" height="12"><path d="M2 3l4 4 4-4" stroke="#555" fill="none" stroke-width="1.200"/></svg>
<span class="t" style="left:662px;top:597px;font-weight:bold">General</span>
<span class="t" style="left:662px;top:616px">Startup Command</span>
<span class="t" style="left:662px;top:635px">Working Directory</span>
<span class="t" style="left:883px;top:616px;font-weight:bold">npm start</span>

<div style="left:636px;top:955px;width:566px;height:58px;background:#f0f0f0;border:1px solid #9c9c9c;box-sizing:border-box"></div>
<span class="t" style="left:642px;top:958px;font-weight:bold">Startup Command</span>
<span class="t" style="left:642px;top:976px">The command to execute at startup.</span>

<div class="btn" style="left:956px;width:73px;border:2px solid #0078d7;line-height:21px">OK</div>
<div class="btn" style="left:1041px;width:74px">Cancel</div>
<div class="btn" style="left:1127px;width:74px;background:#ccc;border-color:#bfbfbf;color:#838383">Apply</div>

<!-- cursor -->
<svg class="a" style="left:738px;top:812px" width="16" height="22"><path d="M1 1v15l3.500-3.500 2.500 6 2.500-1-2.500-6h5z" fill="#fff" stroke="#111" stroke-width="1"/></svg>

<!-- watermark -->
<span class="t" style="left:1295px;top:1062px;font-size:20px;line-height:24px;color:rgba(180,180,185,.75)">Activate Windows</span>
<span class="t" style="left:1295px;top:1086px;font-size:14.700px;line-height:18px;color:rgba(180,180,185,.75)">Go to Settings to activate Windows.</span>
</body></html>
